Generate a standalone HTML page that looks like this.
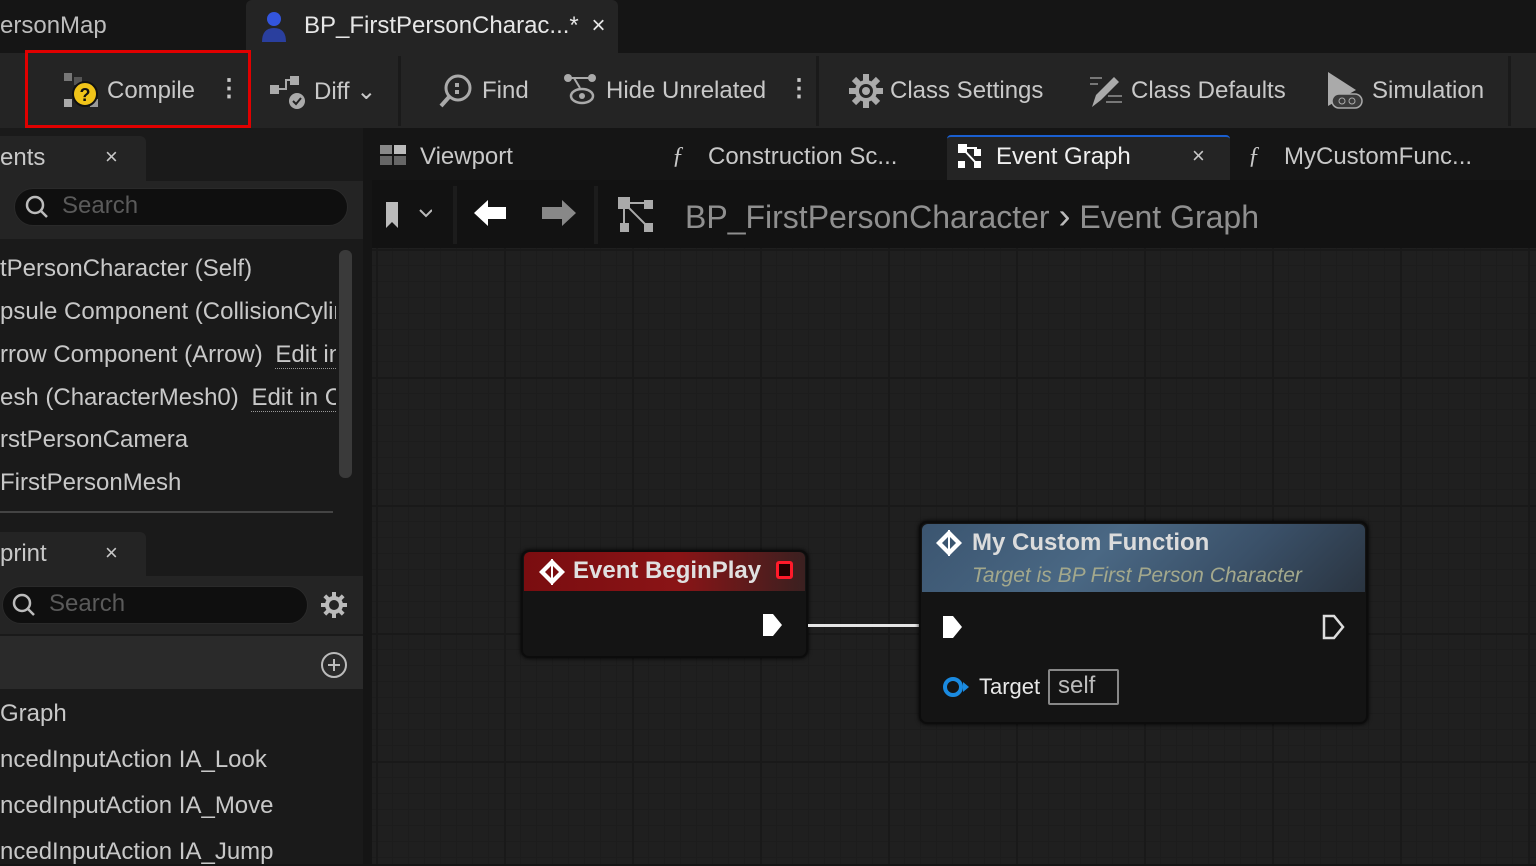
<!DOCTYPE html>
<html><head><meta charset="utf-8"><style>
*{margin:0;padding:0;box-sizing:border-box}
body{width:1536px;height:864px;overflow:hidden;background:#151515;font-family:"Liberation Sans",sans-serif;color:#c0c0c0;position:relative}
.a{position:absolute;white-space:nowrap}
.t{font-size:24px;color:#c8c8c8}
</style></head><body>
<div class="a" style="left:0;top:0;width:1536px;height:53px;background:#151515"></div>
<div class="a t" style="left:0;top:12px;color:#bdbdbd">ersonMap</div>
<div class="a" style="left:246px;top:0;width:372px;height:53px;background:#242424;border-radius:6px 6px 0 0"></div>
<svg class="a" style="left:258px;top:8px" width="32" height="34"><circle cx="16" cy="11" r="7" fill="#3355dd"/><path d="M4 34 Q4 20 16 20 Q28 20 28 34Z" fill="#2a3f9e"/></svg>
<div class="a t" style="left:304px;top:12px;color:#e6e6e6">BP_FirstPersonCharac...* <span style="margin-left:6px">×</span></div>
<div class="a" style="left:0;top:53px;width:1536px;height:75px;background:#242424"></div>
<div class="a" style="left:25px;top:50px;width:226px;height:78px;border:3px solid #e00000"></div>
<svg class="a" style="left:64px;top:73px" width="36" height="36"><rect x="0" y="0" width="8" height="8" fill="#777"/><rect x="10" y="4" width="8" height="8" fill="#555"/><rect x="0" y="26" width="8" height="8" fill="#aaa"/><rect x="26" y="26" width="8" height="8" fill="#999"/><circle cx="21" cy="21" r="12" fill="#f0c419" stroke="#111" stroke-width="2"/><text x="21" y="28" font-size="18" font-weight="bold" text-anchor="middle" fill="#111" font-family="Liberation Sans">?</text></svg>
<div class="a t" style="left:107px;top:77px">Compile</div>
<div class="a t" style="left:217px;top:74px;font-weight:bold">⋮</div>
<svg class="a" style="left:270px;top:74px" width="40" height="36"><rect x="0" y="11" width="9" height="9" fill="#aaa"/><rect x="20" y="2" width="9" height="9" fill="#aaa"/><path d="M9 15 H16 V6 H20" stroke="#aaa" fill="none" stroke-width="2"/><circle cx="27" cy="27" r="8" fill="#aaa"/><path d="M23 27 l3 3 l5 -6" stroke="#222" stroke-width="2" fill="none"/></svg>
<div class="a t" style="left:314px;top:77px">Diff ⌄</div>
<div class="a" style="left:398px;top:56px;width:3px;height:70px;background:#1a1a1a"></div>
<svg class="a" style="left:438px;top:73px" width="36" height="36"><circle cx="20" cy="15" r="12" stroke="#aaa" stroke-width="3" fill="none"/><path d="M11 24 L3 33" stroke="#aaa" stroke-width="4"/><rect x="17" y="10" width="4" height="4" fill="#aaa"/><rect x="17" y="17" width="4" height="4" fill="#aaa"/></svg>
<div class="a t" style="left:482px;top:77px">Find</div>
<svg class="a" style="left:564px;top:74px" width="36" height="32"><circle cx="4" cy="4" r="4" fill="#aaa"/><circle cx="28" cy="4" r="4" fill="#aaa"/><path d="M4 4 H28 M10 4 L16 14" stroke="#aaa" stroke-width="2"/><ellipse cx="18" cy="22" rx="11" ry="7" fill="none" stroke="#aaa" stroke-width="2.5"/><circle cx="18" cy="22" r="3" fill="#aaa"/></svg>
<div class="a t" style="left:606px;top:77px">Hide Unrelated</div>
<div class="a t" style="left:787px;top:74px;font-weight:bold">⋮</div>
<div class="a" style="left:816px;top:56px;width:3px;height:70px;background:#1a1a1a"></div>
<svg class="a" style="left:848px;top:73px" width="36" height="36"><g fill="#aaa"><circle cx="18" cy="18" r="11"/><rect x="15" y="1" width="6" height="34"/><rect x="1" y="15" width="34" height="6"/><rect x="15" y="1" width="6" height="34" transform="rotate(45 18 18)"/><rect x="15" y="1" width="6" height="34" transform="rotate(-45 18 18)"/></g><circle cx="18" cy="18" r="7" fill="#242424"/><circle cx="18" cy="18" r="4" fill="#aaa"/></svg>
<div class="a t" style="left:890px;top:77px">Class Settings</div>
<svg class="a" style="left:1088px;top:73px" width="36" height="36"><path d="M4 34 L8 22 L26 4 L31 9 L13 27Z" fill="#aaa"/><path d="M2 5 H14 M2 11 H10 M18 29 H34 M20 23 H34" stroke="#777" stroke-width="2"/></svg>
<div class="a t" style="left:1131px;top:77px">Class Defaults</div>
<svg class="a" style="left:1328px;top:72px" width="38" height="38"><path d="M0 0 L28 18 L0 34Z" fill="#aaa"/><rect x="4" y="22" width="30" height="14" rx="7" fill="#3a3a3a" stroke="#aaa" stroke-width="1.5"/><circle cx="14" cy="29" r="3" fill="none" stroke="#aaa"/><circle cx="24" cy="29" r="3" fill="none" stroke="#aaa"/></svg>
<div class="a t" style="left:1372px;top:77px">Simulation</div>
<div class="a" style="left:1508px;top:56px;width:3px;height:70px;background:#1a1a1a"></div>
<div class="a" style="left:0;top:128px;width:363px;height:736px;background:#1a1a1a"></div>
<div class="a" style="left:0;top:136px;width:146px;height:45px;background:#242424;border-radius:0 6px 0 0"></div>
<div class="a t" style="left:0;top:144px">ents</div>
<div class="a t" style="left:105px;top:144px;font-size:22px">×</div>
<div class="a" style="left:0;top:181px;width:363px;height:58px;background:#242424"></div>
<div class="a" style="left:14px;top:188px;width:334px;height:38px;background:#0f0f0f;border-radius:19px;border:1px solid #2a2a2a"></div>
<svg class="a" style="left:24px;top:194px" width="26" height="26"><circle cx="11" cy="11" r="8" stroke="#bbb" stroke-width="2.5" fill="none"/><path d="M17 17 L23 23" stroke="#bbb" stroke-width="2.5"/></svg>
<div class="a t" style="left:62px;top:192px;color:#5a5a5a">Search</div>
<div class="a t" style="left:0;top:255px">tPersonCharacter (Self)</div>
<div class="a t" style="left:0;top:298px">psule Component (CollisionCylin</div>
<div class="a t" style="left:0;top:341px">rrow Component (Arrow) <span style="margin-left:6px;border-bottom:1px dotted #999">Edit in</span></div>
<div class="a t" style="left:0;top:384px">esh (CharacterMesh0) <span style="margin-left:6px;border-bottom:1px dotted #999">Edit in C</span></div>
<div class="a t" style="left:0;top:426px">rstPersonCamera</div>
<div class="a t" style="left:0;top:469px">FirstPersonMesh</div>
<div class="a" style="left:336px;top:240px;width:27px;height:272px;background:#1a1a1a"></div>
<div class="a" style="left:339px;top:250px;width:13px;height:228px;background:#3a3a3a;border-radius:6px"></div>
<div class="a" style="left:0;top:511px;width:333px;height:2px;background:#444"></div>
<div class="a" style="left:0;top:532px;width:146px;height:44px;background:#242424;border-radius:0 6px 0 0"></div>
<div class="a t" style="left:0;top:540px">print</div>
<div class="a t" style="left:105px;top:540px;font-size:22px">×</div>
<div class="a" style="left:0;top:576px;width:363px;height:58px;background:#242424"></div>
<div class="a" style="left:2px;top:586px;width:306px;height:38px;background:#0f0f0f;border-radius:19px;border:1px solid #2a2a2a"></div>
<svg class="a" style="left:11px;top:592px" width="26" height="26"><circle cx="11" cy="11" r="8" stroke="#bbb" stroke-width="2.5" fill="none"/><path d="M17 17 L23 23" stroke="#bbb" stroke-width="2.5"/></svg>
<div class="a t" style="left:49px;top:590px;color:#5a5a5a">Search</div>
<svg class="a" style="left:320px;top:591px" width="28" height="28"><g fill="#bbb"><circle cx="14" cy="14" r="9"/><rect x="12" y="1" width="4" height="26"/><rect x="1" y="12" width="26" height="4"/><rect x="12" y="1" width="4" height="26" transform="rotate(45 14 14)"/><rect x="12" y="1" width="4" height="26" transform="rotate(-45 14 14)"/></g><circle cx="14" cy="14" r="5" fill="#242424"/></svg>
<div class="a" style="left:0;top:636px;width:363px;height:53px;background:#2a2a2a"></div>
<svg class="a" style="left:320px;top:651px" width="28" height="28"><circle cx="14" cy="14" r="12" stroke="#bbb" stroke-width="2" fill="none"/><path d="M14 8 V20 M8 14 H20" stroke="#bbb" stroke-width="2"/></svg>
<div class="a t" style="left:0;top:700px">Graph</div>
<div class="a t" style="left:0;top:746px">ncedInputAction IA_Look</div>
<div class="a t" style="left:0;top:792px">ncedInputAction IA_Move</div>
<div class="a t" style="left:0;top:838px">ncedInputAction IA_Jump</div>
<div class="a" style="left:363px;top:128px;width:1173px;height:52px;background:#151515"></div>
<svg class="a" style="left:380px;top:145px" width="28" height="22"><rect x="0" y="0" width="12" height="9" fill="#888"/><rect x="14" y="0" width="12" height="9" fill="#bbb"/><rect x="0" y="11" width="12" height="9" fill="#666"/><rect x="14" y="11" width="12" height="9" fill="#666"/></svg>
<div class="a t" style="left:420px;top:143px">Viewport</div>
<div class="a t" style="left:672px;top:143px;font-style:italic;font-family:'Liberation Serif',serif">ƒ</div>
<div class="a t" style="left:708px;top:143px">Construction Sc...</div>
<div class="a" style="left:947px;top:135px;width:283px;height:45px;background:#242424;border-top:2px solid #1a5fd0;border-radius:4px 4px 0 0"></div>
<svg class="a" style="left:958px;top:144px" width="26" height="26"><rect x="0" y="0" width="9" height="9" fill="#fff"/><rect x="16" y="5" width="7" height="7" fill="#fff"/><rect x="0" y="17" width="7" height="7" fill="#fff"/><rect x="16" y="17" width="7" height="7" fill="#fff"/><path d="M4 4 L19 20 M4 4 H19" stroke="#fff" stroke-width="2"/></svg>
<div class="a t" style="left:996px;top:143px;color:#f0f0f0">Event Graph</div>
<div class="a t" style="left:1192px;top:143px;font-size:22px">×</div>
<div class="a t" style="left:1248px;top:143px;font-style:italic;font-family:'Liberation Serif',serif">ƒ</div>
<div class="a t" style="left:1284px;top:143px">MyCustomFunc...</div>
<div class="a" style="left:372px;top:180px;width:1164px;height:684px;background-color:#1f1f1f;background-image:linear-gradient(#191919 2px,transparent 2px),linear-gradient(90deg,#191919 2px,transparent 2px),linear-gradient(#1c1c1c 1px,transparent 1px),linear-gradient(90deg,#1c1c1c 1px,transparent 1px);background-size:128px 128px,128px 128px,16px 16px,16px 16px;background-position:0 -59px,4px 0,0 5px,4px 0"></div>
<div class="a" style="left:372px;top:180px;width:1164px;height:68px;background:#121212"></div>
<svg class="a" style="left:384px;top:198px" width="48" height="34"><path d="M2 4 H14 V30 L8 24 L2 30Z" fill="#bbb"/><path d="M36 12 l6 6 l6 -6" stroke="#bbb" stroke-width="2" fill="none"/></svg>
<div class="a" style="left:453px;top:186px;width:4px;height:58px;background:#1c1c1c"></div>
<svg class="a" style="left:472px;top:198px" width="110" height="30"><path d="M2 15 L16 2 V9 H34 V21 H16 V28Z" fill="#fff"/><path d="M104 15 L90 2 V9 H70 V21 H90 V28Z" fill="#888"/></svg>
<div class="a" style="left:594px;top:186px;width:4px;height:58px;background:#1c1c1c"></div>
<svg class="a" style="left:618px;top:197px" width="40" height="38"><rect x="0" y="0" width="12" height="12" fill="#aaa"/><rect x="26" y="3" width="9" height="9" fill="#aaa"/><rect x="2" y="26" width="9" height="9" fill="#aaa"/><rect x="26" y="26" width="9" height="9" fill="#aaa"/><path d="M6 6 L30 30 M6 6 H30 M6 6 V30" stroke="#aaa" stroke-width="2"/></svg>
<div class="a" style="left:685px;top:195px;font-size:32px;color:#8f8f8f">BP_FirstPersonCharacter <span style="color:#bbb;font-size:36px">›</span> Event Graph</div>
<div class="a" style="left:521px;top:550px;width:287px;height:108px;background:#141414;border-radius:8px;box-shadow:0 0 4px #000;border:2px solid #0c0c0c"></div>
<div class="a" style="left:524px;top:552px;width:281px;height:39px;border-radius:6px 6px 0 0;background:linear-gradient(90deg,#7a0d10,#8a1416 55%,#3a2020)"></div>
<svg class="a" style="left:538px;top:558px" width="28" height="28"><path d="M14 1 L27 14 L14 27 L1 14Z" fill="#fff"/><path d="M14 7 L21 14 L14 21 L7 14Z" fill="#7a0d10"/><path d="M14 1 V27" stroke="#fff" stroke-width="2"/></svg>
<div class="a" style="left:573px;top:557px;font-size:24px;font-weight:bold;color:#e0e0e0">Event BeginPlay</div>
<div class="a" style="left:776px;top:561px;width:17px;height:18px;border:3px solid #ff1a2a;border-radius:3px;background:#200"></div>
<svg class="a" style="left:762px;top:612px" width="22" height="26"><path d="M1 2 H11 L20 13 L11 24 H1Z" fill="#fff"/></svg>
<div class="a" style="left:808px;top:624px;width:112px;height:3px;background:#e6e6e6"></div>
<div class="a" style="left:919px;top:521px;width:449px;height:203px;background:#141414;border-radius:8px;box-shadow:0 0 4px #000;border:2px solid #0c0c0c"></div>
<div class="a" style="left:922px;top:524px;width:443px;height:68px;border-radius:6px 6px 0 0;background:linear-gradient(135deg,#3b5570,#4a6884 40%,#3a5068 70%,#2a3440)"></div>
<svg class="a" style="left:935px;top:529px" width="28" height="28"><path d="M14 1 L27 14 L14 27 L1 14Z" fill="#fff"/><path d="M14 7 L21 14 L14 21 L7 14Z" fill="#3b5570"/><path d="M14 1 V27" stroke="#fff" stroke-width="2"/></svg>
<div class="a" style="left:972px;top:529px;font-size:24px;font-weight:bold;color:#dcdcdc">My Custom Function</div>
<div class="a" style="left:972px;top:564px;font-size:21px;font-style:italic;color:#a3a88c">Target is BP First Person Character</div>
<svg class="a" style="left:942px;top:614px" width="22" height="26"><path d="M1 2 H11 L20 13 L11 24 H1Z" fill="#fff"/></svg>
<svg class="a" style="left:1322px;top:614px" width="24" height="28"><path d="M2 2 H12 L21 13 L12 24 H2Z" fill="none" stroke="#ddd" stroke-width="2.5"/></svg>
<svg class="a" style="left:942px;top:676px" width="28" height="22"><circle cx="11" cy="11" r="8" fill="none" stroke="#1a8ae0" stroke-width="4"/><path d="M21 6 L27 11 L21 16Z" fill="#1a8ae0"/></svg>
<div class="a" style="left:979px;top:674px;font-size:22px;color:#e8e8e8">Target</div>
<div class="a" style="left:1048px;top:669px;width:71px;height:36px;border:2px solid #888;border-radius:2px;background:#141414"></div>
<div class="a" style="left:1058px;top:672px;font-size:24px;color:#bbb">self</div>
</body></html>
